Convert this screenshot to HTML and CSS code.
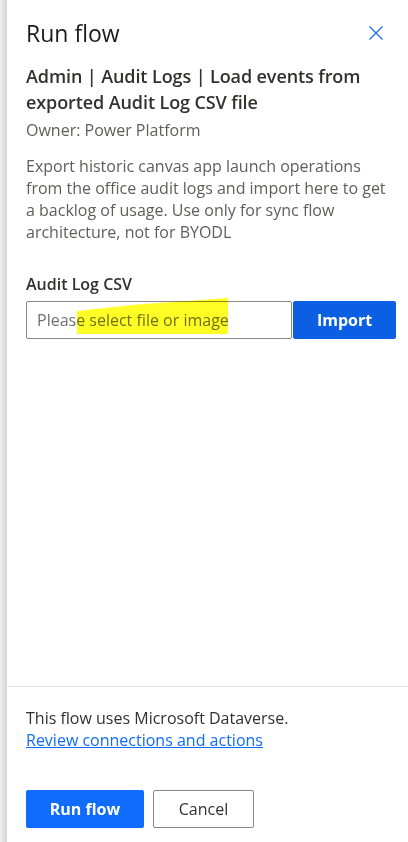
FILE: index.html
```html
<!DOCTYPE html>
<html lang="en">
<head>
  <meta charset="UTF-8" />
  <meta name="viewport" content="width=device-width, initial-scale=1.0" />
  <title>Run flow</title>
  <link rel="stylesheet" href="styles.css">
</head>
<body>
  <div class="backdrop"></div>
  <div class="panel">
    <div class="content">
      <div class="header">
        <h1>Run flow</h1>
        <button class="close" aria-label="Close">
          <svg width="16" height="16" viewBox="0 0 16 16">
            <path d="M1.5 1.5 L14.5 14.5 M14.5 1.5 L1.5 14.5" stroke="#1a73e8" stroke-width="1.4" fill="none" />
          </svg>
        </button>
      </div>

      <h2>Admin | Audit Logs | Load events from exported Audit Log CSV file</h2>
      <p class="owner">Owner: Power Platform</p>

      <p class="desc">Export historic canvas app launch operations<br>from the office audit logs and import here to get<br>a backlog of usage. Use only for sync flow<br>architecture, not for BYODL</p>

      <label for="file">Audit Log CSV</label>
      <div class="file-row">
        <div class="file-input">
          <input type="text" id="file" placeholder="Please select file or image" readonly />
          <span class="highlight"></span>
        </div>
        <button class="import">Import</button>
      </div>
    </div>

    <div class="footer">
      <p class="note">This flow uses Microsoft Dataverse.</p>
      <a href="#" class="review">Review connections and actions</a>
      <div class="actions">
        <button class="primary">Run flow</button>
        <button class="secondary">Cancel</button>
      </div>
    </div>
  </div>
</body>
</html>
```

FILE: styles.css
```css
body {
  margin: 0;
  font-family: "Open Sans", "Noto Sans", sans-serif;
  display: flex;
  height: 842px;
  overflow: hidden;
  background-color: white;
}
.backdrop {
  width: 7px;
  flex-shrink: 0;
  background: linear-gradient(to right, #efefef, #d4d4d4);
}
.panel {
  flex: 1;
  display: flex;
  flex-direction: column;
  background-color: white;
}
.content {
  flex: 1;
  padding: 19px 12px 0 19px;
}
.header {
  display: flex;
  justify-content: space-between;
  align-items: center;
}
h1 {
  margin: 0;
  font-size: 23px;
  font-weight: 400;
  line-height: 28px;
  color: #1b1b1b;
}
.close {
  background: none;
  border: none;
  padding: 0;
  margin-right: 12px;
  width: 16px;
  height: 16px;
  cursor: pointer;
}
h2 {
  margin: 16px 0 0;
  font-size: 18px;
  font-weight: 600;
  line-height: 26px;
  color: #323130;
  letter-spacing: -0.1px;
}
.owner {
  margin: 5px 0 0;
  font-size: 16px;
  line-height: 20px;
  color: #605e5c;
}
.desc {
  margin: 15px 0 0;
  font-size: 16px;
  line-height: 22px;
  color: #605e5c;
  white-space: nowrap;
}
label {
  display: block;
  margin-top: 31px;
  font-size: 16px;
  font-weight: 600;
  line-height: 20px;
  color: #323130;
}
.file-row {
  display: flex;
  margin-top: 7px;
}
.file-input {
  position: relative;
  flex: 1;
}
.file-input input {
  box-sizing: border-box;
  width: 100%;
  height: 38px;
  border: 1px solid #8a8886;
  border-radius: 2px;
  padding: 0 10px;
  font-family: inherit;
  font-size: 16px;
  color: #323130;
}
.file-input input::placeholder {
  color: #707070;
}
.highlight {
  position: absolute;
  left: 51px;
  top: -3px;
  width: 151px;
  height: 36px;
  background-color: rgba(255, 255, 0, 0.85);
  clip-path: polygon(0 36%, 40% 18%, 100% 0, 100% 100%, 0 100%);
  mix-blend-mode: multiply;
  pointer-events: none;
}
.import {
  width: 103px;
  height: 38px;
  margin-left: 1px;
  border: none;
  border-radius: 2px;
  background-color: #0b5fe3;
  color: white;
  font-family: inherit;
  font-size: 16px;
  font-weight: 700;
  cursor: pointer;
}
.footer {
  border-top: 1px solid #e8e8e8;
  padding: 20px 12px 14px 19px;
}
.note {
  margin: 0;
  font-size: 16px;
  line-height: 22px;
  color: #323130;
}
.review {
  font-size: 16px;
  line-height: 22px;
  color: #0f6cfd;
}
.actions {
  display: flex;
  gap: 9px;
  margin-top: 39px;
}
.actions button {
  height: 38px;
  border-radius: 2px;
  font-family: inherit;
  font-size: 16px;
  cursor: pointer;
}
.primary {
  width: 118px;
  border: none;
  background-color: #0f6cfd;
  color: white;
  font-weight: 700;
}
.secondary {
  width: 101px;
  border: 1px solid #8a8886;
  background-color: white;
  color: #323130;
}
```
